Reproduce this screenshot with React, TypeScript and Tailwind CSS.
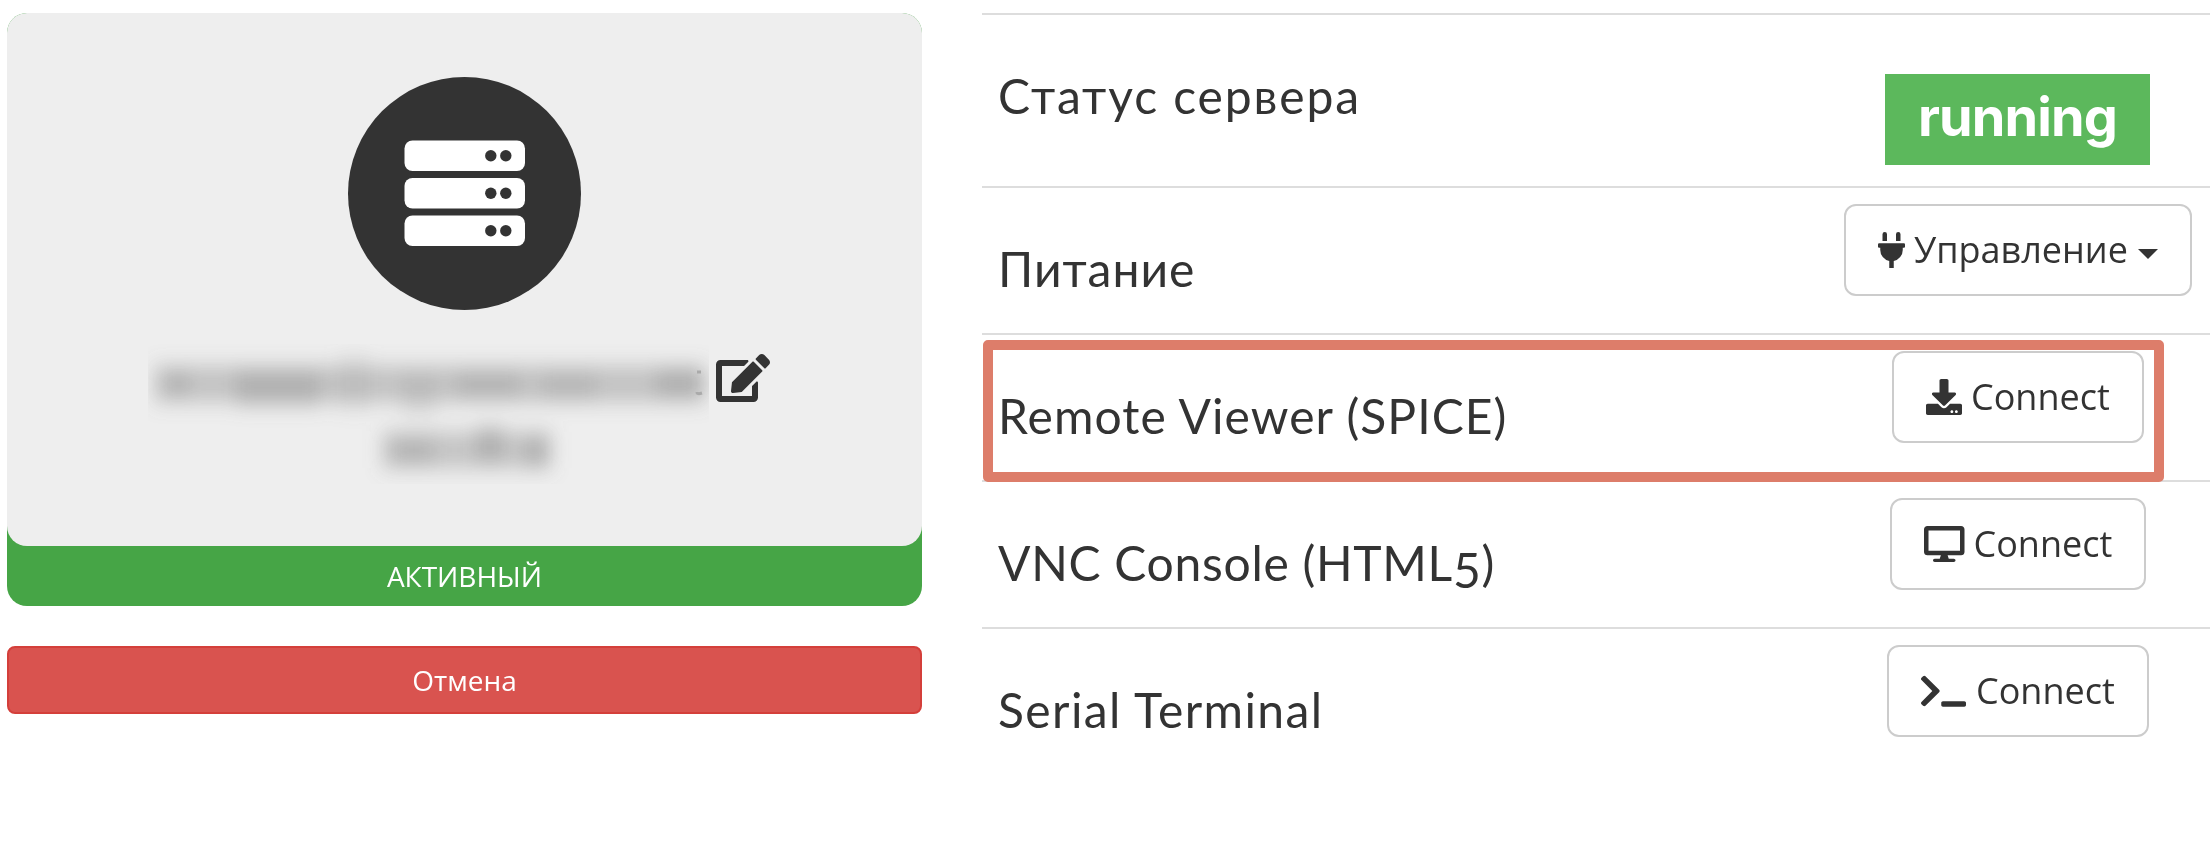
import type { ReactNode } from "react";
import { FaDesktop, FaDownload, FaEdit, FaPlug, FaTerminal } from "react-icons/fa";

const LABEL = "font-['Lato','Open_Sans',sans-serif]";

function ServerIcon() {
  return (
    <svg className="h-[233px] w-[233px]" viewBox="0 0 233 233">
      <circle cx="116.5" cy="116.5" r="116.5" fill="#333" />
      {[63.5, 101, 138.5].map((y) => (
        <g key={y}>
          <rect x="56.5" y={y} width="120.5" height="30.5" rx="8" fill="#fff" />
          <circle cx="142.8" cy={y + 15.2} r="5.7" fill="#333" />
          <circle cx="157.8" cy={y + 15.2} r="5.7" fill="#333" />
        </g>
      ))}
    </svg>
  );
}

function HiddenName() {
  return (
    <div className="ml-[141px] mt-[34px] flex">
      <svg className="h-[140px] w-[561px]" viewBox="0 0 561 140">
        <defs>
          <filter id="soft" x="-10%" y="-50%" width="120%" height="200%">
            <feGaussianBlur stdDeviation="9 10" />
          </filter>
        </defs>
        <g filter="url(#soft)" fill="#777">
          <rect x="6" y="22" width="552" height="36" opacity="0.36" />
          <rect x="20" y="30" width="20" height="20" opacity="0.26" />
          <rect x="88" y="28" width="84" height="34" opacity="0.24" />
          <rect x="190" y="10" width="32" height="56" opacity="0.1" />
          <rect x="254" y="32" width="34" height="40" opacity="0.14" />
          <rect x="308" y="30" width="64" height="22" opacity="0.22" />
          <rect x="394" y="30" width="54" height="24" opacity="0.18" />
          <rect x="508" y="26" width="44" height="26" opacity="0.26" />
          <rect x="234" y="88" width="170" height="36" opacity="0.34" />
          <rect x="246" y="96" width="40" height="22" opacity="0.24" />
          <rect x="328" y="82" width="28" height="34" opacity="0.28" />
          <rect x="376" y="94" width="22" height="28" opacity="0.26" />
        </g>
        <path d="M549 28h4M549 48c0 2 2 2 5 1" stroke="#aaa" strokeWidth="3" fill="none" />
      </svg>
      <FaEdit className="ml-[7px] mt-[10px] h-12 w-[54px] text-[#333]" />
    </div>
  );
}

function Row({ label, labelClass, tall, children }: { label: ReactNode; labelClass: string; tall?: boolean; children: ReactNode }) {
  return (
    <div className={`flex border-t-2 border-[#ddd] ${tall ? "h-[173px]" : "h-[147px]"}`}>
      <div className={`w-[844px] whitespace-nowrap pl-4 pt-[49px] text-[48px] leading-[64px] text-[#333] ${LABEL}`}>
        <span className={labelClass}>{label}</span>
      </div>
      <div className="flex w-[384px] items-start justify-center">{children}</div>
    </div>
  );
}

function Button({ className, children }: { className: string; children: ReactNode }) {
  return (
    <button
      className={`mt-4 flex h-[92px] items-center rounded-xl border-2 border-[#ccc] bg-white pl-8 text-[36px] leading-[50px] text-[#333] ${className}`}
    >
      {children}
    </button>
  );
}

export default function App() {
  return (
    <div className="relative flex h-[848px] w-[2210px] overflow-hidden bg-white pl-[7px] pt-[13px] font-['Open_Sans','Noto_Sans',sans-serif]">
      <div className="w-[915px]">
        <div className="h-[593px] rounded-[20px] bg-[#46a546]">
          <div className="h-[533px] rounded-[20px] bg-[#eee] pt-[63.5px]">
            <div className="flex justify-center">
              <ServerIcon />
            </div>
            <HiddenName />
          </div>
          <div className="pt-[10px] text-center text-[28px] leading-[40px] text-white">АКТИВНЫЙ</div>
        </div>
        <button className="mt-10 flex h-[68px] w-full items-center justify-center rounded-lg border-2 border-[#d43f3a] bg-[#d9534f] text-[28px] leading-[40px] text-white">
          Отмена
        </button>
      </div>

      <div className="ml-[60px] w-[1228px]">
        <Row label="Статус сервера" labelClass="tracking-[1.9px]" tall>
          <span className="mr-px mt-[59px] flex h-[91px] w-[265px] items-center justify-center bg-[#5cb85c] pb-[5px] font-['Inter',sans-serif] text-[54px] font-bold leading-[60px] tracking-[-0.9px] text-white">
            running
          </span>
        </Row>
        <Row label="Питание" labelClass="tracking-[1px]">
          <Button className="w-[348px]">
            <FaPlug className="h-9 w-[27px]" />
            <span className="ml-[9px]">Управление</span>
            <svg className="ml-[10px] mt-[7px] h-[10px] w-5" viewBox="0 0 20 10">
              <path d="M0 0h20L10 10z" fill="#333" />
            </svg>
          </Button>
        </Row>
        <Row label="Remote Viewer (SPICE)" labelClass="tracking-[1.05px]">
          <Button className="w-[252px]">
            <FaDownload className="h-9 w-9" />
            <span className="ml-[9px]">Connect</span>
          </Button>
        </Row>
        <Row
          label={
            <>
              VNC Console (HTML<span className="relative top-[7px]">5</span>)
            </>
          }
          labelClass="tracking-[0.7px]"
        >
          <Button className="w-[256px]">
            <FaDesktop className="h-9 w-[40.5px]" />
            <span className="ml-[9px]">Connect</span>
          </Button>
        </Row>
        <Row label="Serial Terminal" labelClass="tracking-[1.4px]">
          <Button className="w-[262px]">
            <FaTerminal className="h-9 w-[45px]" />
            <span className="ml-[10px]">Connect</span>
          </Button>
        </Row>
      </div>

      <div className="pointer-events-none absolute left-[983px] top-[340px] h-[142px] w-[1181px] rounded-[5px] border-[10px] border-[#dd7d6a]" />
    </div>
  );
}
